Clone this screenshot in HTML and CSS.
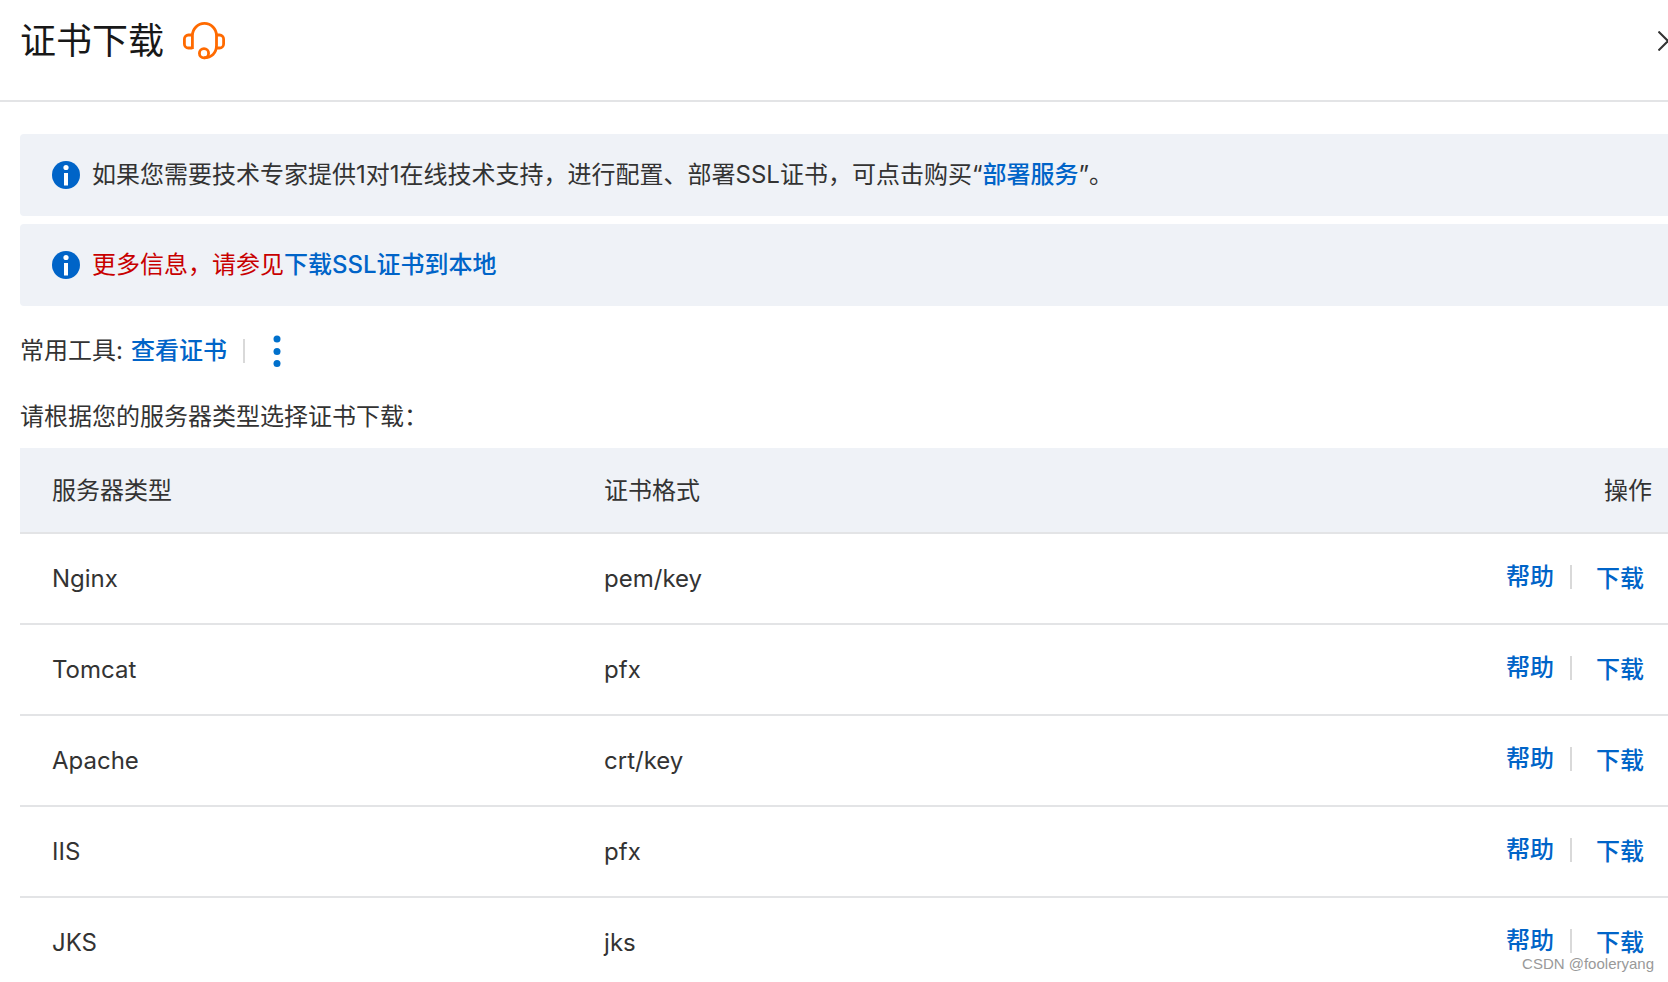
FILE: index.html
```html
<!DOCTYPE html>
<html lang="zh-CN">
<head>
<meta charset="utf-8">
<meta name="viewport" content="width=device-width, initial-scale=1">
<title>证书下载</title>
<link rel="stylesheet" href="styles.css">
</head>
<body>
<div class="drawer">
  <header class="drawer-header">
    <h1 class="drawer-title">证书下载</h1>
    <button class="icon-button" type="button" aria-label="在线客服">
      <svg width="42" height="38" viewBox="0 0 42 38" fill="none" stroke="#ff6a00" stroke-width="2.8">
        <path d="M9.4 27V13.5a12 12 0 0 1 24.1 0V23.6c0 7.5-5 12.2-12.5 12.2"/>
        <path d="M9.4 13H5.4a4 4 0 0 0-4 4v5a4 4 0 0 0 4 4h4M33.5 13h3.1a4 4 0 0 1 4 4v5a4 4 0 0 1-4 4h-3.6"/>
        <circle cx="21" cy="31.2" r="4.6"/>
      </svg>
    </button>
    <button class="icon-button close-button" type="button" aria-label="关闭">
      <svg width="20" height="20" viewBox="0 0 20 20" fill="none" stroke="#333" stroke-width="2">
        <path d="M.5.5l19 19M19.5.5l-19 19"/>
      </svg>
    </button>
  </header>
  <main class="drawer-body">
    <div class="notice">
      <svg class="notice-icon" width="28" height="28" viewBox="0 0 28 28" aria-hidden="true">
        <circle cx="14" cy="14" r="14" fill="#0064c8"/>
        <circle cx="14" cy="6.5" r="2.6" fill="#fff"/>
        <path d="M12 12h4v12.5h-4z" fill="#fff"/>
      </svg>
      <p class="notice-text">如果您需要技术专家提供1对1在线技术支持，进行配置、部署SSL证书，可点击购买“<a class="link" href="#deploy">部署服务</a>”。</p>
    </div>
    <div class="notice">
      <svg class="notice-icon" width="28" height="28" viewBox="0 0 28 28" aria-hidden="true">
        <circle cx="14" cy="14" r="14" fill="#0064c8"/>
        <circle cx="14" cy="6.5" r="2.6" fill="#fff"/>
        <path d="M12 12h4v12.5h-4z" fill="#fff"/>
      </svg>
      <p class="notice-text notice-alert">更多信息，请参见<a class="link" href="#guide">下载SSL证书到本地</a></p>
    </div>
    <div class="tools">
      <span>常用工具:</span>
      <a class="link" href="#view">查看证书</a>
      <span class="divider"></span>
      <button class="icon-button more-button" type="button" aria-label="更多工具">
        <svg width="8" height="32" viewBox="0 0 8 32" fill="#0070cc">
          <circle cx="4" cy="4" r="3.5"/><circle cx="4" cy="16.5" r="3.5"/><circle cx="4" cy="28.5" r="3.5"/>
        </svg>
      </button>
    </div>
    <p class="hint">请根据您的服务器类型选择证书下载：</p>
    <table class="cert-table">
      <thead>
        <tr><th class="col-type" scope="col">服务器类型</th><th scope="col">证书格式</th><th class="col-action" scope="col">操作</th></tr>
      </thead>
      <tbody>
        <tr><td>Nginx</td><td>pem/key</td><td><div class="actions"><div class="action-group"><a class="link" href="#nginx-help">帮助</a><span class="divider"></span></div><a class="link" href="#nginx">下载</a></div></td></tr>
        <tr><td>Tomcat</td><td>pfx</td><td><div class="actions"><div class="action-group"><a class="link" href="#tomcat-help">帮助</a><span class="divider"></span></div><a class="link" href="#tomcat">下载</a></div></td></tr>
        <tr><td>Apache</td><td>crt/key</td><td><div class="actions"><div class="action-group"><a class="link" href="#apache-help">帮助</a><span class="divider"></span></div><a class="link" href="#apache">下载</a></div></td></tr>
        <tr><td>IIS</td><td>pfx</td><td><div class="actions"><div class="action-group"><a class="link" href="#iis-help">帮助</a><span class="divider"></span></div><a class="link" href="#iis">下载</a></div></td></tr>
        <tr><td>JKS</td><td>jks</td><td><div class="actions"><div class="action-group"><a class="link" href="#jks-help">帮助</a><span class="divider"></span></div><a class="link" href="#jks">下载</a></div></td></tr>
      </tbody>
    </table>
  </main>
  <div class="watermark">CSDN @fooleryang</div>
</div>
</body>
</html>
```
FILE: styles.css
```css
* { box-sizing: border-box; }

body {
  margin: 0;
  background: #fff;
  color: #333;
  font-family: Inter, "Noto Sans CJK SC", sans-serif;
  font-size: 24px;
  line-height: 36px;
}

.drawer {
  position: relative;
  height: 100vh;
  overflow: hidden;
}

.drawer-header {
  display: flex;
  align-items: center;
  padding: 15px 0 33px 20px;
  border-bottom: 2px solid #e3e4e6;
}

.drawer-title {
  margin: 0 19px 0 0;
  color: #181818;
  font-size: 36px;
  font-weight: 400;
  line-height: 52px;
}

.icon-button {
  display: flex;
  padding: 0;
  border: 0;
  background: none;
  cursor: pointer;
}

.close-button {
  margin-left: auto;
  margin-right: -10px;
}

.drawer-body { padding: 32px 0 0 20px; }

.notice {
  display: flex;
  align-items: center;
  gap: 12px;
  margin-bottom: 8px;
  padding: 23px 32px;
  border-radius: 4px 0 0 4px;
  background: #eff2f7;
}

.notice-icon { flex: none; }

.notice-text { margin: 0; }

.notice-alert { color: #c80000; }

.link {
  color: #0064c8;
  font-weight: 500;
  text-decoration: none;
}

.tools {
  display: flex;
  align-items: center;
  margin-top: 27px;
}

.tools .link { margin-left: 8px; }

.divider {
  width: 2px;
  height: 24px;
  margin-left: 16px;
  background: #d9d9d9;
}

.more-button { margin-left: 28px; }

.hint { margin: 30px 0 13px; }

.cert-table {
  width: 100%;
  border-collapse: separate;
  border-spacing: 0;
}

.cert-table th,
.cert-table td {
  padding: 0 16px 0 32px;
  border-bottom: 2px solid #e3e4e6;
  text-align: left;
}

.cert-table th {
  height: 86px;
  padding-top: 2px;
  background: #eff2f7;
  font-weight: 400;
}

.cert-table td { height: 91px; }

.cert-table .col-type { width: 33.5%; }

.cert-table .col-action {
  width: 33%;
  text-align: right;
}

.actions {
  display: flex;
  align-items: center;
  justify-content: flex-end;
  gap: 24px;
  padding-right: 8px;
}

.action-group {
  display: flex;
  align-items: center;
  padding-bottom: 4px;
}

.watermark {
  position: absolute;
  right: 14px;
  bottom: 8px;
  color: #999;
  font-family: "Liberation Sans", Arial, sans-serif;
  font-size: 15px;
  line-height: 20px;
  text-shadow: 0 0 2px #fff;
}
```
